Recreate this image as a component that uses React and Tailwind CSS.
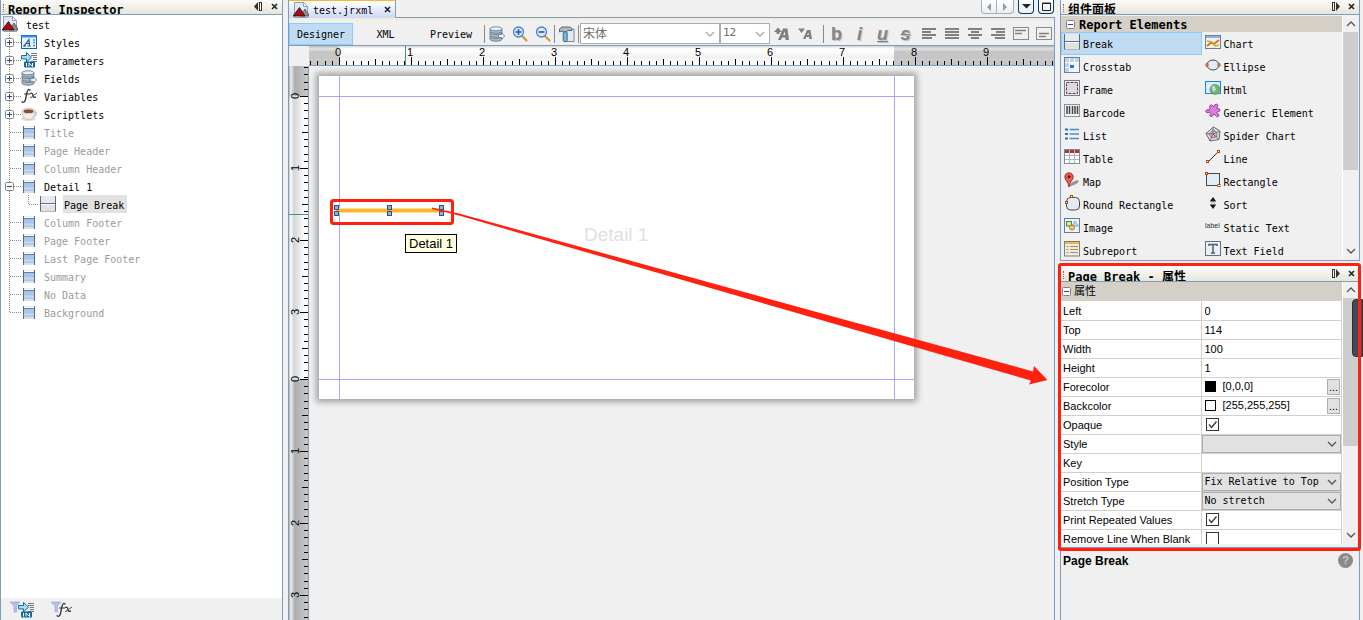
import React from "react";

const mono = "font-['DejaVu_Sans_Mono','Noto_Sans_CJK_SC',monospace]";
const sans = "font-['Liberation_Sans','Noto_Sans_CJK_SC',sans-serif]";

/* ---------- icons ---------- */

function Svg({ w = 16, h = 16, children }) {
  return (
    <svg width={w} height={h} viewBox={`0 0 ${w} ${h}`} className="block shrink-0" aria-hidden="true">
      {children}
    </svg>
  );
}

const ReportIcon = () => (
  <Svg>
    <path d="M1.5 .5h9l4 4v11h-13z" fill="#dde9f5" stroke="#8fa3b8" />
    <path d="M10.5 .5v4h4z" fill="#fff" stroke="#8fa3b8" />
    <path d="M7 14l5-7 4 6v1z" fill="#8a8a8a" stroke="#444" strokeWidth=".7" />
    <path d="M0 14L6.5 5.5 12 14z" fill="#a00d12" stroke="#3a0507" strokeWidth=".8" />
  </Svg>
);
const StylesIcon = () => (
  <Svg>
    <rect x=".5" y="1.5" width="15" height="13" fill="#e8f3fd" stroke="#0a63c8" />
    <path d="M.5 2.5h15" stroke="#3f8fe5" strokeWidth="2" />
    <path d="M2 12h3M6.500 12h3M3 12L8 5.500l.5 6.500M5 9.500h3" stroke="#1256a8" strokeWidth="1.200" fill="none" />
    <path d="M12 6h2M12 8.500h2M12 11.500h2" stroke="#4a94dc" strokeWidth="1.500" />
  </Svg>
);
const InShapes = () => (
  <g>
    <path d="M10 1.5h6M10 3.5h6M12 5.5h4M12 7.5h4M10 9.5h6" stroke="#777" />
    <path d="M.5 3.5h5v-3l5 4.7-5 4.7v-3h-5z" fill="#a6dcf4" stroke="#14699a" />
    <rect x="3" y="9.500" width="11" height="6" rx="1" fill="#14699a" />
    <path d="M5.500 11v3.500M8 14.500V11l3.500 3.500V11" stroke="#fff" fill="none" />
  </g>
);
const ParametersIcon = () => <Svg><InShapes /></Svg>;
const DbShapes = () => (
  <g stroke="#5d7083" strokeWidth=".8">
    <path d="M1 10.500v2.500c0 3 12 3 12 0v-2.500" fill="#a9bac9" />
    <ellipse cx="7" cy="10.500" rx="6" ry="2" fill="#d6e1ea" />
    <path d="M1 6.500v2.500c0 3 12 3 12 0V6.500" fill="#a9bac9" />
    <ellipse cx="7" cy="6.500" rx="6" ry="2" fill="#d6e1ea" />
    <path d="M1 3v2c0 3 12 3 12 0V3" fill="#a9bac9" />
    <ellipse cx="7" cy="2.800" rx="6" ry="2" fill="#eaf1f6" />
    <path d="M9.500 8.500h3V6.800l3.200 3.200-3.200 3.200v-1.700h-3z" fill="#edf3f8" />
  </g>
);
const FieldsIcon = () => <Svg><DbShapes /></Svg>;
const FxShapes = () => (
  <g fill="none" stroke="#333" strokeLinecap="round">
    <path d="M9 2C7.500 .8 6.500 2 6 4.500L4.500 11.500C4 14 2.500 15 1 13.800" strokeWidth="1.300" />
    <path d="M3.500 6h5" />
    <path d="M9.500 5.500c2-1 2 .5 2.500 2s1 2.500 2.500 1.500" strokeWidth="1.300" />
    <path d="M15.500 5.300c-2 0-3 4.200-6 4.200" strokeWidth=".9" />
  </g>
);
const VariablesIcon = () => <Svg><FxShapes /></Svg>;
const ScriptletsIcon = () => (
  <Svg>
    <ellipse cx="7.500" cy="12.500" rx="7" ry="2.500" fill="#dcdcdc" />
    <path d="M13 6c3-1 3.500 3.500-.5 4" fill="none" stroke="#c8c4c0" strokeWidth="1.300" />
    <path d="M1 5c0 5 2.500 8.500 6.500 8.500S14 10 14 5z" fill="#f1efed" stroke="#c2bdb8" strokeWidth=".8" />
    <ellipse cx="7.500" cy="5" rx="6.500" ry="2.800" fill="#fff" stroke="#c2bdb8" strokeWidth=".8" />
    <ellipse cx="7.500" cy="5.200" rx="5" ry="1.900" fill="#8a4a30" />
  </Svg>
);
const BandIcon = () => (
  <Svg>
    <rect x="3" y="4" width="10" height="9" fill="#a9c6e8" />
    <path d="M3 2.500h10" stroke="#ececec" />
    <path d="M3 4.500h10" stroke="#5c7db8" />
    <path d="M3 10.500h10" stroke="#c5d9ef" strokeWidth="2" />
    <path d="M3 14h10" stroke="#dedede" strokeWidth="2" />
    <path d="M2.500 2v13M13.500 2v13" stroke="#5d6b78" />
  </Svg>
);
const BreakIcon = () => (
  <Svg>
    <rect x="1" y="0" width="14" height="7" fill="#e9e9e9" />
    <rect x="1" y="9" width="14" height="6" fill="#e2e2e2" />
    <path d="M1 8h14" stroke="#fff" strokeWidth="2" />
    <path d="M1 7.500h14" stroke="#4a6fb5" />
    <path d="M.5 0v15.500M15.500 0v15.500" stroke="#5d6b78" />
    <path d="M1 15.500h14" stroke="#b5b5b5" />
  </Svg>
);
const CrosstabIcon = () => (
  <Svg>
    <rect x=".5" y=".5" width="15" height="15" fill="#eef4fb" stroke="#6c7f94" />
    <path d="M1 1h14v4H1zM1 1h4v14H1z" fill="#bcd3ee" />
    <path d="M5.500 1v14M10.500 1v14M1 5.500h14M1 10.500h14" stroke="#fff" />
    <rect x="6" y="8" width="4" height="3" fill="#2f6fd0" />
  </Svg>
);
const FrameIcon = () => (
  <Svg>
    <rect x=".5" y=".5" width="15" height="15" fill="#e6ebf2" stroke="#6c7f94" />
    <rect x="2.500" y="2.500" width="11" height="11" fill="#d5dde8" stroke="#a82a10" strokeDasharray="3 1" />
  </Svg>
);
const BarcodeIcon = () => (
  <Svg>
    <rect x=".5" y="1.500" width="15" height="12" fill="#f4f6f8" stroke="#8494a5" />
    <path d="M3 3v8M5.500 3v8M8.500 3v8M11 3v8M13.500 3v8" stroke="#444" strokeWidth="1.500" />
  </Svg>
);
const ListIcon = () => (
  <Svg>
    <path d="M1 3.500h3M1 8h3M1 12.500h3" stroke="#2f6fae" strokeWidth="2" />
    <path d="M5.500 3.500H15M5.500 8H15M5.500 12.500H15" stroke="#4a8ccb" strokeWidth="1.700" />
  </Svg>
);
const TableIcon = () => (
  <Svg>
    <rect x=".5" y=".5" width="15" height="14" fill="#fff" stroke="#7f8a96" />
    <path d="M1 2.500h14" stroke="#b33636" strokeWidth="3" />
    <path d="M5.500 1v13M10.500 1v13M1 6.500h14M1 10.500h14" stroke="#aab6c4" />
  </Svg>
);
const MapIcon = () => (
  <Svg>
    <path d="M5 15c2-5 5-7 10-6.500-1 4-5 4-10 6.500z" fill="#777" opacity=".75" />
    <path d="M5 15C4.500 10 .8 8 .8 5a4.200 4.200 0 0 1 8.400 0C9.200 8 5.500 10 5 15z" fill="#ee5b50" stroke="#8e1c17" strokeWidth=".8" />
    <circle cx="5" cy="4.800" r="1.500" fill="#5a100c" />
  </Svg>
);
const Knob = ({ x, y }) => <rect x={x} y={y} width="2" height="2" fill="#fff" stroke="#b0480d" />;
const RoundRectIcon = () => (
  <Svg>
    <rect x="2.500" y="2.500" width="13" height="12.500" rx="4" fill="#e4ebf3" stroke="#3f4a56" />
    <Knob x={6.500} y={.5} /><Knob x={1.500} y={6.500} />
  </Svg>
);
const ImageIcon = () => (
  <Svg>
    <rect x=".5" y=".5" width="15" height="14" fill="#eaf3fb" stroke="#5f7fa0" />
    <rect x="2.500" y="3.500" width="5" height="4.500" fill="#cfe7b5" stroke="#55873a" />
    <path d="M8 8l3-5 3.500 5z" fill="#bcd7f0" stroke="#7b9cc0" strokeWidth=".8" />
    <circle cx="8" cy="9.500" r="2.500" fill="#f6cf5b" stroke="#a67d18" />
  </Svg>
);
const SubreportIcon = () => (
  <Svg>
    <rect x=".5" y=".5" width="15" height="14.500" fill="#f3ecdc" stroke="#7d7d7d" />
    <path d="M1 2h14" stroke="#f1b93d" strokeWidth="2" />
    <path d="M2.500 5.500h2M6 5.500h8M2.500 8.500h2M6 8.500h8M2.500 11.500h2M6 11.500h8" stroke="#9c8f78" />
  </Svg>
);
const ChartIcon = () => (
  <Svg>
    <rect x=".5" y="1.500" width="15" height="13" fill="#eef4ea" stroke="#667f99" />
    <path d="M1 3h14" stroke="#8db2dd" strokeWidth="2" />
    <path d="M2 12l4-3.500 3 1.500 5-4" fill="none" stroke="#e06a10" strokeWidth="1.800" />
    <path d="M2 7l5 1 3 4 4-1" fill="none" stroke="#c9a23a" strokeWidth="1.300" />
  </Svg>
);
const EllipseIcon = () => (
  <Svg>
    <ellipse cx="8" cy="8" rx="6" ry="5" fill="#e4ebf3" stroke="#3f4a56" />
    <Knob x={1} y={7} /><Knob x={13} y={7} />
  </Svg>
);
const HtmlIcon = () => (
  <Svg>
    <rect x=".5" y="1.500" width="15" height="12" fill="#dcecf9" stroke="#1386f5" />
    <circle cx="10" cy="9.500" r="5" fill="#6fb563" stroke="#3f8a4b" strokeWidth=".6" />
    <path d="M7 7c2-2 3-1 3 0s2 2 0 4-3-1-3-4z" fill="#b4dcf2" />
  </Svg>
);
const GenericIcon = () => (
  <Svg>
    <path d="M5 5C3.500 3 6 1 7.500 2.500L8.500 4 10 1.500c2-1 3.500.5 2.500 2L11.800 5.500l2.500.5c1.500 1.500 0 3-1.500 2.500L12 9.500l2 3c-1 2-3 1-3.500 0L9 11l-2 2.500C5 14 4.500 12 5.500 10.500L4.500 9C2 10.500 0 9 1 7.500s3-.5 3.500-.5z" fill="#e07ae0" stroke="#8c2b91" strokeWidth=".9" />
  </Svg>
);
const SpiderIcon = () => (
  <Svg>
    <path d="M8.500 1l6.500 4-1 8.500L5 15 1 7.500z" fill="#ddd" stroke="#666" />
    <path d="M8.500 4l3.500 2.500-.5 4.500-5 1L4 8z" fill="#d5a5d8" stroke="#888" />
    <path d="M8 8V1M8 8l7-3M8 8l6 5.500M8 8l-3 7M8 8L1 7.500" stroke="#666" strokeWidth=".8" />
  </Svg>
);
const LineIcon = () => (
  <Svg>
    <path d="M2.500 13.500l11-11" stroke="#333" />
    <Knob x={1.500} y={11.500} /><Knob x={12.500} y={1.500} />
  </Svg>
);
const RectangleIcon = () => (
  <Svg>
    <rect x="1.500" y="1.500" width="13" height="12" fill="#e4ebf3" stroke="#3f4a56" />
    <Knob x={.5} y={.5} /><Knob x={13} y={12.500} />
  </Svg>
);
const SortIcon = () => (
  <Svg>
    <path d="M8 2l3.200 4.500H4.800zM8 14l3.200-4.500H4.800z" fill="#111" />
    <path d="M6 7h4M6 9h4" stroke="#999" strokeWidth=".7" />
  </Svg>
);
const LabelIcon = () => (
  <Svg>
    <text x="0" y="10" fontSize="7" fill="#333" fontFamily="Liberation Sans, sans-serif">label</text>
  </Svg>
);
const TextFieldIcon = () => (
  <Svg>
    <rect x=".5" y=".5" width="15" height="14" fill="#eaf0f6" stroke="#5f7285" />
    <path d="M4 5V3.500h8V5M8 3.500v8.500M6 12h4" fill="none" stroke="#50606f" strokeWidth="1.500" />
  </Svg>
);
const Zoomer = ({ plus }) => (
  <Svg>
    <path d="M10 10l4.500 4.500" stroke="#d9963a" strokeWidth="2.200" strokeLinecap="round" />
    <circle cx="6.500" cy="6" r="5" fill="#dbeafb" stroke="#4d80d2" strokeWidth="1.300" />
    <path d={plus ? "M3.500 6h6M6.500 3v6" : "M3.500 6h6"} stroke="#1f56c0" strokeWidth="1.600" />
  </Svg>
);
const HammerIcon = () => (
  <Svg>
    <path d="M6 3h9v12.500H6z" fill="#e3eaf0" stroke="#7d8a96" />
    <path d="M.5 6V3L3 1h7c2.500 0 3 1.500 3 3.500H8.500L7.500 6H4L3 5z" fill="#aebac4" stroke="#4d5965" strokeWidth=".9" />
    <rect x="4.200" y="6" width="4" height="9.500" rx="1" fill="#7db4dc" stroke="#2f648e" strokeWidth=".9" />
  </Svg>
);
const FilterShape = () => <path d="M0 1h10L6.500 5v6H4V5z" fill="#b3bdee" stroke="#98a3dc" strokeWidth=".6" />;

const BigA = () => (
  <Svg>
    <path d="M4 14l5-11.500h4.500L15 14h-3.500l-.2-2.500H8L7 14zM9 9h2.200L11 5.500z" fill="#808080" fillRule="evenodd" />
    <path d="M0 6l4-4.500L8 6zM2.500 6h3v2h-3z" fill="#808080" />
  </Svg>
);
const SmallA = () => (
  <Svg>
    <path d="M6 13l4-9h3.500L15 13h-2.800l-.2-2H9.300L8.500 13zM10 9h1.700L11.500 6.500z" fill="#808080" fillRule="evenodd" />
    <path d="M1 2.500h7L4.500 7z" fill="#808080" />
  </Svg>
);
const fmtText = `${sans} text-[18px] leading-none font-bold text-[#858585] [text-shadow:1px_1px_1px_#bbb]`;
const lineSets = {
  left: "M1 3h14M1 6h9M1 9h14M1 12h10",
  justify: "M1 3h14M1 6h14M1 9h14M1 12h14",
  center: "M1 3h14M4 6h8M1 9h14M4 12h8",
  right: "M1 3h14M6 6h9M1 9h14M5 12h10",
};
const AlignIcon = ({ kind }) => (
  <Svg><path d={lineSets[kind]} stroke="#808080" strokeWidth="2" /></Svg>
);
const VAlign = ({ top }) => (
  <Svg>
    <rect x=".5" y="1.500" width="15" height="12" fill="none" stroke="#8a8a8a" />
    <path d={top ? "M2 4.500h11M2 7.500h7" : "M3 7.500h10M3 10.500h7"} stroke="#808080" strokeWidth="1.600" />
  </Svg>
);
const Chevron = ({ up, color = "#555" }) => (
  <Svg w={10} h={8}>
    <path d={up ? "M1 6l4-4 4 4" : "M1 2l4 4 4-4"} fill="none" stroke={color} strokeWidth="1.300" />
  </Svg>
);

/* ---------- shared pieces ---------- */

function PanelHeader({ title, flip }) {
  return (
    <div className="flex h-[15px] shrink-0 items-start overflow-hidden border-b border-[#7f9db9] bg-gradient-to-b from-[#fbfbf9] to-[#e6e5da]">
      <span className="mt-1 ml-[2px] h-2 w-[5px] border-l border-dotted border-[#777]" />
      <h2 className={`${mono} flex-1 truncate pt-[2px] text-[12px] leading-4 font-bold whitespace-pre`}>{title}</h2>
      <button aria-label="Minimize" className="mr-1 grid h-3 w-3 place-items-center">
        <Svg w={9} h={9}>
          {flip ? <path d="M5 0v9l4-4.500z" fill="#333" /> : <path d="M4 0v9L0 4.500z" fill="#333" />}
          <rect x={flip ? 1.500 : 5.500} y=".5" width="2" height="8" fill="#fff" stroke="#333" />
        </Svg>
      </button>
      <button aria-label="Close panel" className="mr-[2px] grid h-3 w-3 place-items-center">
        <CloseX />
      </button>
    </div>
  );
}
const CloseX = () => (
  <Svg w={7} h={7}><path d="M1 1l5 5M6 1L1 6" stroke="#222" strokeWidth="1.600" /></Svg>
);

function Scrollbar({ thumb }) {
  return (
    <div className="flex w-[17px] shrink-0 flex-col items-stretch border-l border-white bg-[#f0f0f0] pr-px">
      <button aria-label="Scroll up" className="grid h-4 place-items-center"><Chevron up /></button>
      <div className={`${thumb} bg-[#cdcdcd]`} />
      <div className="flex-1" />
      <button aria-label="Scroll down" className="grid h-[18px] place-items-center"><Chevron /></button>
    </div>
  );
}

const Box = ({ open }) => (
  <Svg w={9} h={9}>
    <rect x=".5" y=".5" width="8" height="8" rx="1" fill="#fbfbf8" stroke="#848484" />
    <path d={open ? "M2 4.500h5" : "M2 4.500h5M4.500 2v5"} stroke="#26479b" />
  </Svg>
);

/* ---------- inspector ---------- */

const tree = [
  { t: "Styles", I: StylesIcon, exp: 1 },
  { t: "Parameters", I: ParametersIcon, exp: 1 },
  { t: "Fields", I: FieldsIcon, exp: 1 },
  { t: "Variables", I: VariablesIcon, exp: 1 },
  { t: "Scriptlets", I: ScriptletsIcon, exp: 1 },
  { t: "Title", off: 1 },
  { t: "Page Header", off: 1 },
  { t: "Column Header", off: 1 },
  { t: "Detail 1", exp: 1, open: 1 },
  { t: "Page Break", child: 1 },
  { t: "Column Footer", off: 1 },
  { t: "Page Footer", off: 1 },
  { t: "Last Page Footer", off: 1 },
  { t: "Summary", off: 1 },
  { t: "No Data", off: 1 },
  { t: "Background", off: 1, last: 1 },
];

function TreeRow({ t, I = BandIcon, exp, open, off, child, last }) {
  const w = child ? 39 : 20;
  const lines = child ? "M8.500 0v18M27.500 0v9.500M28 9.500h10" : last ? "M8.500 0v9.500M9 9.500h11" : "M8.500 0v18M9 9.500h11";
  return (
    <li className="flex h-[18px] items-center">
      <div className="grid shrink-0 items-center">
        <div className="col-start-1 row-start-1">
          <Svg w={w} h={18}><path d={lines} fill="none" stroke="#888" strokeDasharray="1 1" /></Svg>
        </div>
        {exp && (
          <button aria-label={`Toggle ${t}`} className="col-start-1 row-start-1 ml-1 block w-[9px]"><Box open={open} /></button>
        )}
      </div>
      {child ? <BreakIcon /> : <I />}
      <span className={`h-[18px] px-[1px] leading-[22px] ${off ? "text-[#9a9a9a]" : "text-black"} ${child ? "ml-[7px] bg-[#e2e2e2] pr-[3px]" : "ml-[6px]"}`}>{t}</span>
    </li>
  );
}

function Inspector() {
  return (
    <aside className="flex w-[283px] shrink-0 flex-col border-x border-[#7f9db9] bg-[#f0f0f0]">
      <PanelHeader title="Report Inspector" />
      <div className={`flex-1 bg-white ${mono} text-[10px]`}>
        <div className="flex h-[18px] items-center pl-[1px]"><ReportIcon /><span className="ml-2 h-[18px] leading-[22px]">test</span></div>
        <ul>{tree.map((r) => <TreeRow key={r.t} {...r} />)}</ul>
      </div>
      <div className="flex h-[22px] items-center gap-4 pl-[9px]">
        <button aria-label="Filter parameters">
          <Svg w={25} h={17}><FilterShape /><g transform="translate(8 1)"><InShapes /></g></Svg>
        </button>
        <button aria-label="Filter variables">
          <Svg w={22} h={17}><FilterShape /><g transform="translate(5 1)"><FxShapes /></g></Svg>
        </button>
      </div>
    </aside>
  );
}

/* ---------- editor ---------- */

const hTicks = Array.from({ length: 200 }, (_, i) => i - 4);

function HRuler() {
  return (
    <svg className="block h-[19px] w-full" aria-label="Horizontal ruler">
      <defs>
        <linearGradient id="rh" x1="0" y1="0" x2="0" y2="1">
          <stop offset="0" stopColor="#d8d8d8" /><stop offset=".15" stopColor="#fff" />
          <stop offset=".6" stopColor="#f2f2f2" /><stop offset="1" stopColor="#fff" />
        </linearGradient>
        <linearGradient id="rg" x1="0" y1="0" x2="0" y2="1">
          <stop offset="0" stopColor="#b8b8b8" /><stop offset=".15" stopColor="#e4e4e4" />
          <stop offset=".3" stopColor="#c6c6c6" /><stop offset="1" stopColor="#c6c6c6" />
        </linearGradient>
      </defs>
      <rect width="100%" height="19" fill="url(#rg)" />
      <rect x="30" width="555" height="19" fill="url(#rh)" />
      <path d={hTicks.map((i) => `M${Math.round(30 + i * 7.2) + 0.5} 19v${i % 10 === 0 ? -8 : i % 5 === 0 ? -6 : -4}`).join("")} stroke="#000" />
      <path d="M96.500 0v19" stroke="#3d9490" />
      <g className={sans} fontSize="11" textAnchor="middle">
        {[0, 1, 2, 3, 4, 5, 6, 7, 8, 9].map((n) => <text key={n} x={29 + n * 72} y="10">{n}</text>)}
      </g>
    </svg>
  );
}

function VRuler() {
  const a = Array.from({ length: 44 }, (_, i) => i - 4).filter((i) => 30 + i * 7.2 < 313);
  const b = Array.from({ length: 120 }, (_, i) => i);
  const tick = (o) => (i) => `M19 ${Math.round(o + i * 7.2) + 0.5}h${i % 10 === 0 ? -8 : i % 5 === 0 ? -6 : -4}`;
  const label = (o) => (n) => {
    const y = o + n * 72;
    return <text key={`${o}-${n}`} transform={`translate(10 ${y}) rotate(-90)`} textAnchor="middle">{n}</text>;
  };
  return (
    <svg className="block h-full w-[19px] shrink-0" aria-label="Vertical ruler">
      <defs>
        <linearGradient id="vw">
          <stop offset="0" stopColor="#c4c4c4" /><stop offset=".1" stopColor="#fff" />
          <stop offset=".25" stopColor="#d4d4d4" /><stop offset=".7" stopColor="#f6f6f6" /><stop offset="1" stopColor="#fff" />
        </linearGradient>
        <linearGradient id="vg">
          <stop offset="0" stopColor="#aaa" /><stop offset=".1" stopColor="#eee" />
          <stop offset=".3" stopColor="#adadad" /><stop offset="1" stopColor="#c8c8c8" />
        </linearGradient>
      </defs>
      <rect width="19" height="100%" fill="url(#vg)" />
      <rect y="30" width="19" height="284" fill="url(#vw)" />
      <path d={a.map(tick(30)).join("") + b.map(tick(313)).join("")} stroke="#000" />
      <path d="M0 148.500h19" stroke="#3d9490" />
      <g className={sans} fontSize="11">
        {[0, 1, 2, 3].map(label(30))}
        {[0, 1, 2, 3].map(label(313))}
      </g>
    </svg>
  );
}

const Handle = ({ x, y }) => <rect x={x + 0.5} y={y + 0.5} width="4" height="4" fill="#8fb4d8" stroke="#2c5678" />;

function Canvas() {
  return (
    <div className="relative flex-1 overflow-hidden border-l border-[#7f9db9] bg-[#f0f0f0]">
      <div className="absolute top-[10px] left-[10px] h-[323px] w-[595px] bg-white shadow-[0_0_6px_3px_rgba(0,0,0,0.33)]">
        <div className="absolute inset-y-0 left-5 w-px bg-[#a6a6ff]" />
        <div className="absolute inset-y-0 right-[19px] w-px bg-[#a6a6ff]" />
        <div className="absolute inset-x-0 top-5 h-px bg-[#a6a6ff]" />
        <div className="absolute inset-x-0 bottom-[19px] h-px bg-[#a6a6ff]" />
        <span className={`${sans} absolute top-[147px] left-[265px] text-[19px] leading-6 text-[#e0e0e0]`}>Detail 1</span>
      </div>
      <div className={`${sans} absolute top-[168px] left-[96px] h-[19px] border border-black bg-[#ffffe1] px-[3px] text-[13px] leading-[17px]`}>Detail 1</div>
      <svg className="absolute top-0 left-0 h-[340px] w-[750px]" aria-hidden="true">
        <rect x="27" y="142" width="106" height="5" fill="#fddf9c" />
        <rect x="27" y="143" width="106" height="3" fill="#ffb52a" />
        {[25, 78, 130].map((x) => (
          <g key={x}><Handle x={x} y={139} /><Handle x={x} y={145} /></g>
        ))}
        <rect x="22.500" y="134.500" width="121" height="23" rx="2" fill="none" stroke="#ff2010" strokeWidth="3" />
        <path d="M123 141.500L150 147.500 724 305.500 725 300 738.500 314 720 318.500 722 314.500 150 149.500 123 143z" fill="#ff2010" />
      </svg>
    </div>
  );
}

const Sep = ({ cls = "" }) => <span className={`h-[18px] w-px shrink-0 bg-[#8a8a8a] ${cls}`} />;
const Tool = ({ label, children }) => (
  <button aria-label={label} title={label} className="grid h-[20px] w-[23px] shrink-0 place-items-center">{children}</button>
);

function Combo({ label, value, cls }) {
  return (
    <label className={`grid h-[21px] shrink-0 items-center ${cls}`}>
      <select aria-label={label} defaultValue={value} className="col-start-1 row-start-1 h-full w-full appearance-none border border-[#adadad] bg-white pl-[2px] text-[#6d6d6d]">
        <option>{value}</option>
      </select>
      <span className="pointer-events-none col-start-1 row-start-1 mr-[5px] justify-self-end"><Chevron color="#aaa" /></span>
    </label>
  );
}

function Editor() {
  const round = "grid h-[14px] place-items-center border border-t-0 bg-gradient-to-b from-white to-[#eee]";
  return (
    <main className="flex min-w-0 flex-1 flex-col border-l border-[#7f9db9]">
      <div className="flex h-[18px] shrink-0 items-stretch">
        <div className={`flex w-[107px] items-center border-t border-r border-t-[#ffb52a] border-r-[#7f9db9] bg-gradient-to-b from-white to-[#cbd9f6] pl-1 ${mono} text-[10px]`}>
          <ReportIcon />
          <span className="ml-1 flex-1 pt-px">test.jrxml</span>
          <button aria-label="Close tab" className="mr-1"><CloseX /></button>
        </div>
        <div className="flex flex-1 items-start justify-end border-b border-[#7f9db9]">
          <button aria-label="Previous tab" className={`${round} w-4 rounded-bl border-[#9db0c4]`}>
            <Svg w={8} h={10}><path d="M6 1v8L2 5z" fill="#999" /></Svg>
          </button>
          <button aria-label="Next tab" className={`${round} w-[17px] rounded-br border-l-0 border-[#9db0c4]`}>
            <Svg w={8} h={10}><path d="M2 1v8l4-4z" fill="#999" /></Svg>
          </button>
          <button aria-label="Tab list" className={`${round} ml-1 w-4 rounded-b border-[#003c74]`}>
            <Svg w={9} h={8}><path d="M0 1h9L4.500 5.500z" fill="#222" /></Svg>
          </button>
          <button aria-label="Maximize" className={`${round} mr-[1px] ml-1 w-4 rounded-b border-[#003c74]`}>
            <Svg w={9} h={9}><path d="M.5 1h8v7.500h-8zM.5 1.500h8" fill="none" stroke="#222" /></Svg>
          </button>
        </div>
      </div>
      <div className="flex min-h-0 flex-1 flex-col border-r border-[#7f9db9]">
        <div className={`flex h-[28px] shrink-0 items-center overflow-hidden border-t-2 border-b border-t-[#f3ecd8] border-b-[#7f9db9] pt-[2px] ${mono} text-[10px]`}>
          <button className="h-[22px] w-16 shrink-0 border border-[#90c8f6] bg-[#c0dcf3] pt-px">Designer</button>
          <button className="h-[22px] w-[65px] shrink-0 pt-px">XML</button>
          <button className="h-[22px] w-[66px] shrink-0 pt-px">Preview</button>
          <Sep />
          <Tool label="Report query"><FieldsIcon /></Tool>
          <Tool label="Zoom in"><Zoomer plus /></Tool>
          <Tool label="Zoom out"><Zoomer /></Tool>
          <Sep />
          <Tool label="Format tools"><HammerIcon /></Tool>
          <Sep cls="mr-px" />
          <Combo label="Font" value="宋体" cls="w-[140px] text-[12px]" />
          <Combo label="Font size" value="12" cls="w-[50px] text-[11px]" />
          <Tool label="Increase font"><BigA /></Tool>
          <Tool label="Decrease font"><SmallA /></Tool>
          <Sep cls="ml-[7px] mr-px" />
          <Tool label="Bold"><span className={fmtText}>b</span></Tool>
          <Tool label="Italic"><span className={`${fmtText} italic`}>i</span></Tool>
          <Tool label="Underline"><span className={`${fmtText} italic underline`}>u</span></Tool>
          <Tool label="Strikethrough"><span className={`${fmtText} italic line-through`}>s</span></Tool>
          <Tool label="Align left"><AlignIcon kind="left" /></Tool>
          <Tool label="Justify"><AlignIcon kind="justify" /></Tool>
          <Tool label="Align center"><AlignIcon kind="center" /></Tool>
          <Tool label="Align right"><AlignIcon kind="right" /></Tool>
          <Tool label="Align top"><VAlign top /></Tool>
          <Tool label="Align middle"><VAlign /></Tool>
        </div>
        <div className="h-5 shrink-0 overflow-hidden pl-5">
          <div className="border-b border-[#7f9db9]"><HRuler /></div>
        </div>
        <div className="flex min-h-0 flex-1">
          <VRuler />
          <Canvas />
        </div>
      </div>
    </main>
  );
}

/* ---------- right column ---------- */

const palette = [
  ["Break", BreakIcon], ["Chart", ChartIcon],
  ["Crosstab", CrosstabIcon], ["Ellipse", EllipseIcon],
  ["Frame", FrameIcon], ["Html", HtmlIcon],
  ["Barcode", BarcodeIcon], ["Generic Element", GenericIcon],
  ["List", ListIcon], ["Spider Chart", SpiderIcon],
  ["Table", TableIcon], ["Line", LineIcon],
  ["Map", MapIcon], ["Rectangle", RectangleIcon],
  ["Round Rectangle", RoundRectIcon], ["Sort", SortIcon],
  ["Image", ImageIcon], ["Static Text", LabelIcon],
  ["Subreport", SubreportIcon], ["Text Field", TextFieldIcon],
];

function Palette() {
  return (
    <section className="flex h-[261px] shrink-0 flex-col border-x border-b border-[#7f9db9]">
      <PanelHeader title="组件面板" flip />
      <div className="flex min-h-0 flex-1 pt-px">
        <div className={`min-w-0 flex-1 ${mono}`}>
          <h3 className="flex h-4 items-center gap-1 bg-[#d4d0c8] pl-[5px] text-[12px] font-bold">
            <button aria-label="Collapse report elements"><Box open /></button><span className="pt-px">Report Elements</span>
          </h3>
          <div className="grid grid-cols-2 text-[10px]">
            {palette.map(([name, I], i) => (
              <button key={name} className={`flex h-[23px] items-center gap-[3px] border pt-px pl-[2px] text-left whitespace-nowrap ${i === 0 ? "border-[#90c8f6] bg-[#c0dcf3]" : "border-transparent"}`}>
                <span className="-mt-1"><I /></span><span>{name}</span>
              </button>
            ))}
          </div>
        </div>
        <Scrollbar thumb="h-[138px]" />
      </div>
    </section>
  );
}

const ColorCell = ({ name, value, swatch }) => (
  <div className="flex h-[18px] items-center">
    <span className={`ml-[3px] h-[11px] w-[11px] border border-black ${swatch}`} />
    <span className="ml-[7px] flex-1">{value}</span>
    <button aria-label={`Edit ${name}`} className="mr-px h-4 w-[13px] border border-[#adadad] bg-[#e1e1e1] leading-[14px]">...</button>
  </div>
);
const CheckCell = ({ id, on }) => (
  <div className="grid h-[18px] w-[18px] items-center overflow-hidden pl-1">
    <input id={id} type="checkbox" defaultChecked={on} className="peer col-start-1 row-start-1 h-[13px] w-[13px] appearance-none border border-[#333] bg-white" />
    <span className="pointer-events-none invisible col-start-1 row-start-1 peer-checked:visible">
      <Svg w={13} h={13}><path d="M3 6.500l2.500 3L10.500 3.500" fill="none" stroke="#333" strokeWidth="1.300" /></Svg>
    </span>
  </div>
);
const SelectCell = ({ id, value }) => (
  <div className="grid h-[18px] items-center">
    <select id={id} defaultValue={value} className={`${mono} col-start-1 row-start-1 h-[18px] w-full appearance-none border border-[#adadad] bg-[#e1e1e1] pl-[2px] text-[10px]`}>
      <option>{value}</option>
    </select>
    <span className="pointer-events-none col-start-1 row-start-1 mr-[4px] justify-self-end"><Chevron /></span>
  </div>
);
const InputCell = ({ id, value }) => (
  <input id={id} defaultValue={value} className="block h-[18px] w-full bg-transparent pt-px pl-[3px]" />
);

const props = [
  ["Left", InputCell, { value: "0" }],
  ["Top", InputCell, { value: "114" }],
  ["Width", InputCell, { value: "100" }],
  ["Height", InputCell, { value: "1" }],
  ["Forecolor", ColorCell, { value: "[0,0,0]", swatch: "bg-black" }],
  ["Backcolor", ColorCell, { value: "[255,255,255]", swatch: "bg-white" }],
  ["Opaque", CheckCell, { on: true }],
  ["Style", SelectCell, { value: "" }],
  ["Key", InputCell, { value: "" }],
  ["Position Type", SelectCell, { value: "Fix Relative to Top" }],
  ["Stretch Type", SelectCell, { value: "No stretch" }],
  ["Print Repeated Values", CheckCell, { on: true }],
  ["Remove Line When Blank", CheckCell, { on: false }],
];

function Properties() {
  return (
    <section className="relative mt-[5px] flex h-[282px] shrink-0 flex-col border-x border-b border-[#7f9db9]">
      <div className="flex h-4 flex-col justify-end overflow-hidden bg-[#fbfbf9]"><PanelHeader title="Page Break - 属性" flip /></div>
      <div className="flex h-[262px]">
        <div className={`min-w-0 flex-1 overflow-hidden border-r border-[#d4d0c8] ${sans} text-[11px]`}>
          <h3 className="flex h-[19px] items-center gap-[3px] bg-[#d4d0c8] pl-px"><button aria-label="Collapse properties"><Box open /></button>属性</h3>
          <table className="w-full table-fixed border-collapse bg-white">
            <tbody>
              {props.map(([name, Cell, p]) => {
                const id = name.toLowerCase().replaceAll(" ", "-");
                return (
                  <tr key={name} className="h-[19px] border-b border-[#d4d0c8]">
                    <th scope="row" className="border-r border-[#d4d0c8] p-0 pt-px pl-[2px] text-left font-normal whitespace-nowrap">
                      {Cell === ColorCell ? name : <label htmlFor={id}>{name}</label>}
                    </th>
                    <td className="p-0"><Cell id={id} name={name} {...p} /></td>
                  </tr>
                );
              })}
            </tbody>
          </table>
        </div>
        <Scrollbar thumb="h-[148px]" />
      </div>
      <div className="absolute top-[33px] -right-[4px] h-[58px] w-[11px] rounded-l border border-[#2c323c] bg-[#434a57]">
        <span className="absolute top-3 right-[1px] h-9 border-l-2 border-dotted border-[#8a919c]" />
      </div>
      <div className="pointer-events-none absolute -top-[3px] -right-[2px] -bottom-[4px] -left-[3px] rounded-[3px] border-[3px] border-[#ff2010]" />
    </section>
  );
}

export default function App() {
  return (
    <div className="flex h-screen gap-[5px] overflow-hidden bg-[#f0f0f0] pr-[3px] text-black">
      <Inspector />
      <Editor />
      <div className="flex w-[300px] shrink-0 flex-col">
        <Palette />
        <Properties />
        <div className={`flex flex-1 items-start justify-between border-x border-[#7f9db9] px-[2px] pt-[5px] pr-[6px] ${sans} text-[12px] leading-4 font-bold`}>
          <span>Page Break</span>
          <button aria-label="Help" className="grid h-[15px] w-[15px] place-items-center rounded-full bg-[#8a8a8a] text-[11px] leading-none text-[#c8c8c8]">?</button>
        </div>
      </div>
    </div>
  );
}
